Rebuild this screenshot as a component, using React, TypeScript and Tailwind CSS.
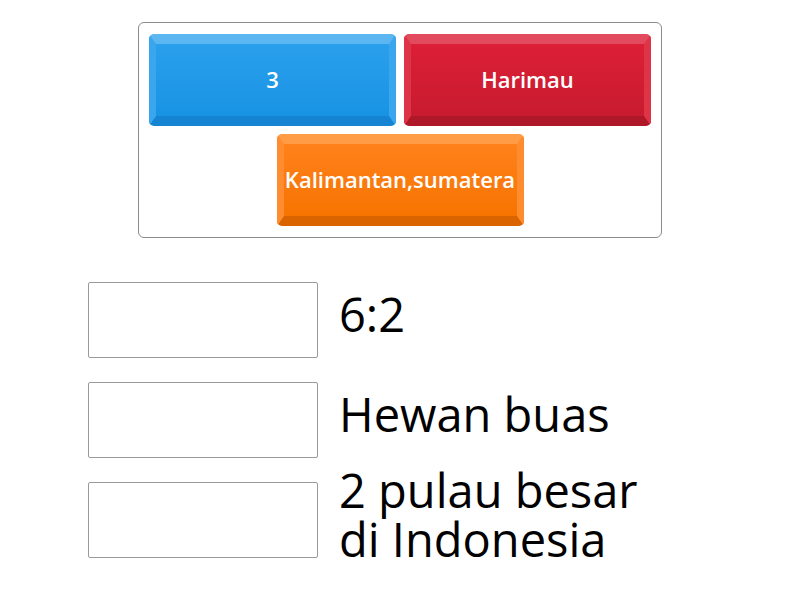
import React from 'react';

type Tile = { label: string; body: string; top: string; side: string; bottom: string };

const tiles: Tile[] = [
  {
    label: '3',
    body: 'bg-gradient-to-b from-[#2aa0ec] to-[#1893e4]',
    top: 'border-t-[#5cb6f2]',
    side: 'border-x-[#3aa6ee]',
    bottom: 'border-b-[#1584d2]',
  },
  {
    label: 'Harimau',
    body: 'bg-gradient-to-b from-[#dc1f36] to-[#c81b2f]',
    top: 'border-t-[#e24b5d]',
    side: 'border-x-[#de3447]',
    bottom: 'border-b-[#ae1829]',
  },
  {
    label: 'Kalimantan,sumatera',
    body: 'bg-gradient-to-b from-[#ff8119] to-[#f77400]',
    top: 'border-t-[#ff9c45]',
    side: 'border-x-[#ff8d2f]',
    bottom: 'border-b-[#d96400]',
  },
];

const targets = [['6:2'], ['Hewan buas'], ['2 pulau besar', 'di Indonesia']];

function TileButton({ t }: { t: Tile }) {
  return (
    <div
      className={`w-[247px] h-[92px] rounded-[5px] border-t-[10px] border-x-[7px] border-b-[10px] ${t.top} ${t.side} ${t.bottom} ${t.body} flex items-center justify-center`}
    >
      <span className="text-white font-semibold text-[22px] leading-none whitespace-nowrap -mt-[2px]">{t.label}</span>
    </div>
  );
}

export default function App() {
  return (
    <div className="w-[800px] h-[600px] bg-white overflow-hidden" style={{ fontFamily: '"Open Sans", "Noto Sans", sans-serif' }}>
      <div className="mx-auto mt-[22px] w-[524px] h-[216px] border border-[#8c8c8c] rounded-[6px] px-[10px] pt-[11px] flex flex-col items-center gap-[8px]">
        <div className="flex gap-[8px]">
          <TileButton t={tiles[0]} />
          <TileButton t={tiles[1]} />
        </div>
        <TileButton t={tiles[2]} />
      </div>

      <div className="mt-[44px] pl-[88px] flex flex-col gap-[24px]">
        {targets.map((lines, i) => (
          <div key={i} className="h-[76px] flex items-center gap-[21px]">
            <div className="w-[230px] h-[76px] border border-[#9a9a9a] rounded-[2px] bg-white shrink-0" />
            <div className="pb-[11px] text-[47px] leading-[49px] text-black whitespace-nowrap">
              {lines.map((l) => (
                <div key={l}>{l}</div>
              ))}
            </div>
          </div>
        ))}
      </div>
    </div>
  );
}
